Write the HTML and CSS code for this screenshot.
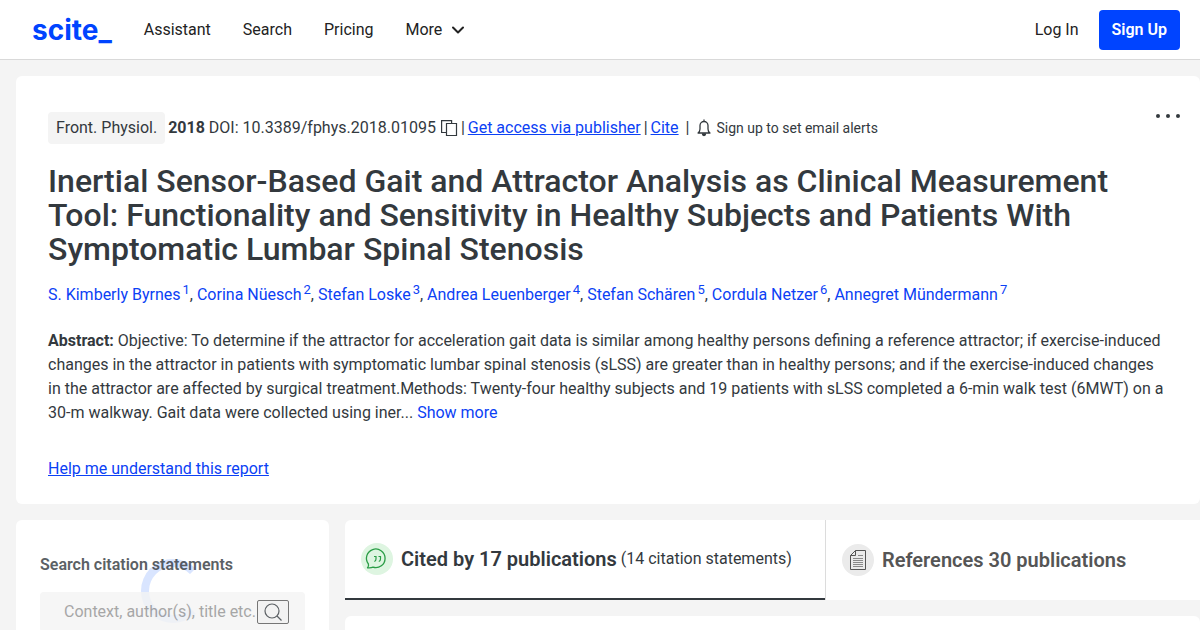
FILE: index.html
```html
<!DOCTYPE html>
<html lang="en">
<head>
<meta charset="utf-8">
<meta name="viewport" content="width=device-width, initial-scale=1">
<title>Inertial Sensor-Based Gait and Attractor Analysis - scite</title>
<link rel="stylesheet" href="styles.css">
</head>
<body>
<header class="header">
  <a class="logo" href="#">scite_</a>
  <nav class="nav">
    <a href="#">Assistant</a>
    <a href="#">Search</a>
    <a href="#">Pricing</a>
    <button class="more" type="button">More
      <svg width="12" height="8" viewBox="0 0 12 8" fill="none" stroke="currentColor" stroke-width="2" stroke-linecap="round" stroke-linejoin="round" aria-hidden="true"><path d="M1 1.500l5 5 5-5"/></svg>
    </button>
  </nav>
  <a class="login" href="#">Log In</a>
  <button class="signup" type="button">Sign Up</button>
</header>
<main class="page">
  <article class="card report">
    <button class="menu" type="button" aria-label="More options">
      <svg width="26" height="6" viewBox="0 0 26 6" fill="currentColor" aria-hidden="true"><circle cx="3" cy="3" r="2"/><circle cx="13" cy="3" r="2"/><circle cx="23" cy="3" r="2"/></svg>
    </button>
    <div class="meta">
      <span class="journal">Front. Physiol.</span>
      <span><strong>2018</strong> DOI: 10.3389/fphys.2018.01095</span>
      <button class="copy" type="button" aria-label="Copy DOI">
        <svg width="17" height="17" viewBox="0 0 17 17" fill="none" stroke="currentColor" stroke-width="1.200" aria-hidden="true"><path d="M5.500 12.500H.600V.600h10v2.500M5.500 3.500h10v12h-10z"/></svg>
      </button>
      <span>|</span>
      <a class="link" href="#">Get access via publisher</a>
      <span>|</span>
      <a class="link" href="#">Cite</a>
      <span class="bar-wide">|</span>
      <button class="alerts" type="button">
        <svg width="14" height="18" viewBox="0 0 14 18" fill="none" stroke="currentColor" stroke-width="1.300" stroke-linejoin="round" aria-hidden="true"><path d="M1 14h12c-1.500-1-2-2.400-2-4V6.500a4 4 0 0 0-8 0V10c0 1.600-.500 3-2 4zM7 .500v2"/><path d="M5.500 15a1.500 1.500 0 0 0 3 0z" fill="currentColor"/></svg>
        Sign up to set email alerts
      </button>
    </div>
    <h1 class="title">Inertial Sensor-Based Gait and Attractor Analysis as Clinical Measurement Tool: Functionality and Sensitivity in Healthy Subjects and Patients With Symptomatic Lumbar Spinal Stenosis</h1>
    <p class="authors"><a href="#">S. Kimberly Byrnes<sup>1</sup></a>, <a href="#">Corina Nüesch<sup>2</sup></a>, <a href="#">Stefan Loske<sup>3</sup></a>, <a href="#">Andrea Leuenberger<sup>4</sup></a>, <a href="#">Stefan Schären<sup>5</sup></a>, <a href="#">Cordula Netzer<sup>6</sup></a>, <a href="#">Annegret Mündermann<sup>7</sup></a></p>
    <p class="abstract"><strong>Abstract:</strong> Objective: To determine if the attractor for acceleration gait data is similar among healthy persons defining a reference attractor; if exercise-induced changes in the attractor in patients with symptomatic lumbar spinal stenosis (sLSS) are greater than in healthy persons; and if the exercise-induced changes in the attractor are affected by surgical treatment.Methods: Twenty-four healthy subjects and 19 patients with sLSS completed a 6-min walk test (6MWT) on a 30-m walkway. Gait data were collected using iner... <a href="#">Show more</a></p>
    <a class="link" href="#">Help me understand this report</a>
  </article>
  <div class="columns">
    <aside class="card filters">
      <div class="spinner"></div>
      <div class="loading">
        <label class="filters-label" for="q">Search citation statements</label>
        <form class="search">
          <input id="q" type="text" placeholder="Context, author(s), title etc.">
          <button type="button" aria-label="Search">
            <svg width="18" height="18" viewBox="0 0 18 18" fill="none" stroke="currentColor" stroke-width="1.200" aria-hidden="true"><circle cx="8" cy="8" r="7"/><path d="M13 13l4.500 4.500"/></svg>
          </button>
        </form>
      </div>
    </aside>
    <section class="results">
      <div class="tabs">
        <button class="tab tab-active" type="button">
          <svg width="32" height="32" viewBox="0 0 32 32" fill="none" aria-hidden="true"><circle cx="16" cy="16" r="16" fill="#def5e1"/><path d="M6.500 24.800c1.200-1 1.300-2.300.900-3.800A9.300 9.300 0 1 1 12 24.200c-1.500.700-3 .800-5.500.600z" stroke="#2a9d46" stroke-width="1.300" stroke-linejoin="round"/><path d="M13 13.500h2v2.500q0 2-1.700 2.500M17.500 13.500h2v2.500q0 2-1.700 2.500" stroke="#2a9d46" stroke-width="1.200"/></svg>
          <span class="tab-title">Cited by 17 publications</span>
          <span>(14 citation statements)</span>
        </button>
        <button class="tab" type="button">
          <svg width="32" height="32" viewBox="0 0 32 32" fill="none" aria-hidden="true"><circle cx="16" cy="16" r="16" fill="#ebebeb"/><path d="M13.500 6.500h10v19h-15v-14zM13.500 6.500v5h-5" stroke="#555" stroke-linejoin="round"/><path d="M16 11.500h5M11 14.500h10M11 16.500h10M11 18.500h10M11 20.500h10M11 22.500h10" stroke="#8a8a8a"/></svg>
          <span class="tab-title">References 30 publications</span>
        </button>
      </div>
      <div class="card statements"></div>
    </section>
  </div>
</main>
</body>
</html>
```
FILE: styles.css
```css
* { box-sizing: border-box; }
body {
  margin: 0;
  background: #f4f4f4;
  color: #33393e;
  font: 16px/24px Roboto, "Liberation Sans", sans-serif;
}
button { font: inherit; color: inherit; background: none; border: 0; padding: 0; cursor: pointer; }
a { color: #0b41f5; text-decoration: none; }
.header {
  display: flex;
  align-items: center;
  height: 60px;
  padding: 1px 20px 0 32px;
  background: #fff;
  border-bottom: 1px solid #d9d9d9;
  color: #222;
}
.header a { color: inherit; }
.header .logo { color: #0044ff; font: 700 28px/32px Inter, sans-serif; }
.nav { display: flex; gap: 32px; margin: 0 auto 0 32px; }
.more { display: flex; align-items: center; gap: 10px; }
.login { margin-right: 20px; }
.signup { height: 40px; padding: 0 13px; border-radius: 4px; background: #0044ff; color: #fff; font-weight: 600; }
.page { padding: 16px 0 0 16px; }
.card { background: #fff; border-radius: 6px; }
.report { position: relative; padding: 36px 32px 23px; }
.menu { position: absolute; top: 26px; right: 19px; line-height: 24px; }
.meta { display: flex; align-items: center; gap: 3px; height: 32px; }
.journal { padding: 4px 8px; border-radius: 4px; background: #f4f4f4; }
.copy { display: flex; margin-left: 2px; }
.bar-wide { margin: 0 4px; }
.link { text-decoration: underline; }
.alerts { display: flex; align-items: center; gap: 6px; font-size: 14px; }
.title { margin: 20px 0 17px; font-size: 32px; line-height: 34px; font-weight: 500; }
.authors { margin: 0 0 22px; }
.authors sup { margin-left: 2px; font-size: 13px; line-height: 0; }
.abstract { margin: 0 0 32px; }
.columns { display: flex; gap: 16px; margin-top: 16px; }
.filters { position: relative; flex: 0 0 313px; min-width: 0; padding: 33px 24px; }
.spinner {
  position: absolute;
  left: 125px;
  top: 39px;
  width: 64px;
  height: 64px;
  border: 8px solid #d9e5ff;
  border-right-color: transparent;
  border-radius: 50%;
}
.loading { position: relative; opacity: 0.8; }
.filters-label { display: block; margin-bottom: 15px; font-weight: 600; }
.search { display: flex; align-items: center; height: 40px; padding: 0 16px 0 24px; border-radius: 4px; background: #f4f4f4; }
.search input { flex: 1; min-width: 0; padding: 0; border: 0; background: none; font: inherit; color: inherit; }
.search input::placeholder { color: #919191; opacity: 1; }
.search button { display: flex; flex: none; align-items: center; justify-content: center; width: 32px; height: 24px; border: 1px solid #555; border-radius: 2px; background: #efefef; }
.results { flex: 1; min-width: 0; }
.tabs { display: flex; height: 80px; border-radius: 6px 0 0 0; background: #fff; overflow: hidden; }
.tab { flex: 1 0 0; display: flex; align-items: center; gap: 4px; padding: 0 16px; border-left: 1px solid #dcdcdc; color: #555; }
.tab svg { margin-right: 4px; }
.tab-active { flex: 0 0 480px; border-left: 0; border-bottom: 2px solid #33393e; color: #33393e; }
.tab-title { font-size: 20px; font-weight: 600; }
.statements { min-height: 14px; margin-top: 16px; border-radius: 6px 6px 0 0; }
```
